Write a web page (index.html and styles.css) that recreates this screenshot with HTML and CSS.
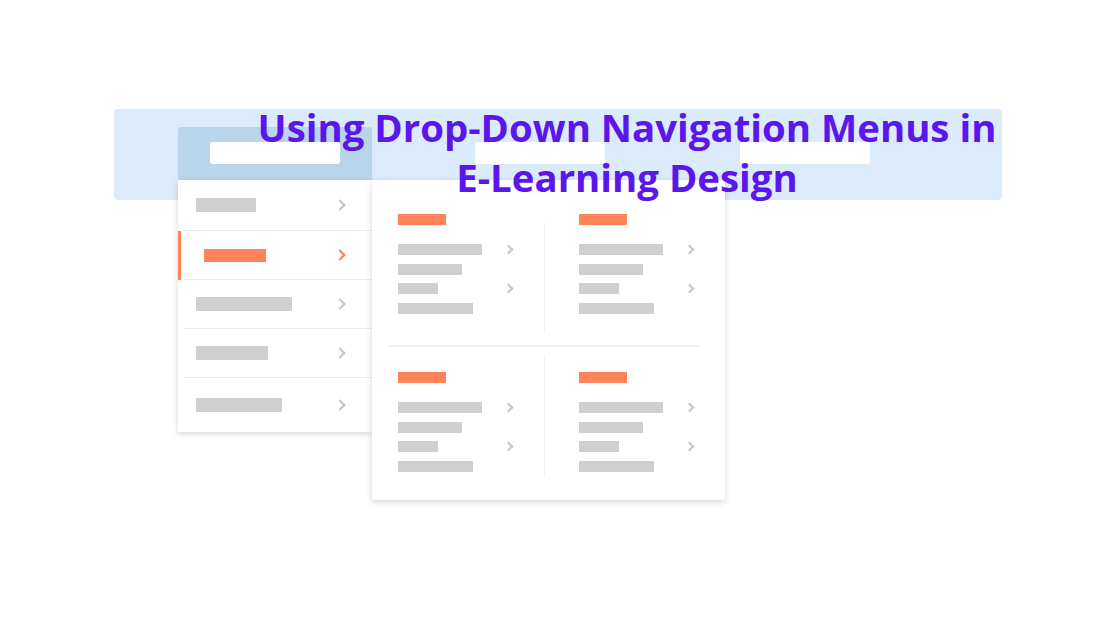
FILE: index.html
```html
<!DOCTYPE html>
<html lang="en">
<head>
  <meta charset="UTF-8" />
  <meta name="viewport" content="width=device-width, initial-scale=1.0"/>
  <title>Drop-Down Navigation Menus</title>
  <link rel="stylesheet" href="styles.css">
</head>

<body>
  <div class="scene">
    <nav class="navbar">
      <div class="tab active">
        <span class="pill"></span>

        <!-- first level menu -->
        <ul class="dropdown">
          <li class="item"><span class="bar w60"></span><span class="chev"></span></li>
          <li class="item current"><span class="bar orange w62"></span><span class="chev"></span></li>
          <li class="item"><span class="bar w96"></span><span class="chev"></span></li>
          <li class="item"><span class="bar w72"></span><span class="chev"></span></li>
          <li class="item last"><span class="bar w86"></span><span class="chev"></span></li>
        </ul>

        <!-- mega menu for the current item -->
        <div class="mega">
          <div class="mega-row">
            <div class="group">
              <span class="head"></span>
              <div class="links">
                <div class="link"><span class="bar w84"></span><span class="chev"></span></div>
                <div class="link"><span class="bar w64"></span></div>
                <div class="link"><span class="bar w40"></span><span class="chev"></span></div>
                <div class="link"><span class="bar w75"></span></div>
              </div>
            </div>
            <div class="vline top"></div>
            <div class="group right">
              <span class="head"></span>
              <div class="links">
                <div class="link"><span class="bar w84"></span><span class="chev"></span></div>
                <div class="link"><span class="bar w64"></span></div>
                <div class="link"><span class="bar w40"></span><span class="chev"></span></div>
                <div class="link"><span class="bar w75"></span></div>
              </div>
            </div>
          </div>

          <div class="hline"></div>

          <div class="mega-row">
            <div class="group">
              <span class="head"></span>
              <div class="links">
                <div class="link"><span class="bar w84"></span><span class="chev"></span></div>
                <div class="link"><span class="bar w64"></span></div>
                <div class="link"><span class="bar w40"></span><span class="chev"></span></div>
                <div class="link"><span class="bar w75"></span></div>
              </div>
            </div>
            <div class="vline bottom"></div>
            <div class="group right">
              <span class="head"></span>
              <div class="links">
                <div class="link"><span class="bar w84"></span><span class="chev"></span></div>
                <div class="link"><span class="bar w64"></span></div>
                <div class="link"><span class="bar w40"></span><span class="chev"></span></div>
                <div class="link"><span class="bar w75"></span></div>
              </div>
            </div>
          </div>
        </div>
      </div>

      <div class="tab"><span class="pill"></span></div>
      <div class="tab"><span class="pill"></span></div>
    </nav>

    <h1 class="title">Using Drop-Down Navigation Menus in<br>E-Learning Design</h1>
  </div>
</body>
</html>
```

FILE: styles.css
```css
body {
  margin: 0;
  background: #fff;
  font-family: "Open Sans", sans-serif;
}
.scene {
  position: relative;
  width: 1113px;
  height: 630px;
  padding-top: 109px;
  box-sizing: border-box;
  overflow: hidden;
}

/* top bar */
.navbar {
  margin-left: 114px;
  width: 888px;
  height: 91px;
  background: #dbebfb;
  border-radius: 4px;
  display: flex;
  gap: 71px;
  padding: 18px 0 0 64px;
  box-sizing: border-box;
}
.tab {
  position: relative;
  width: 194px;
  height: 53px;
  display: flex;
  justify-content: center;
  padding-top: 15px;
  box-sizing: border-box;
}
.tab.active {
  background: #b9d5eb;
  border-radius: 3px 3px 0 0;
}
.pill {
  width: 130px;
  height: 22px;
  background: #fff;
  border-radius: 3px;
}

/* placeholder text */
.bar {
  display: block;
  height: 14px;
  background: #cfcfcf;
}
.bar.orange { background: #ff8359; height: 13px; }
.w40 { width: 40px; }
.w60 { width: 60px; }
.w62 { width: 62px; }
.w64 { width: 64px; }
.w72 { width: 72px; }
.w75 { width: 75px; }
.w84 { width: 84px; }
.w86 { width: 86px; }
.w96 { width: 96px; }

.chev {
  width: 6px;
  height: 6px;
  border-top: 2px solid #c6c6c6;
  border-right: 2px solid #c6c6c6;
  transform: rotate(45deg);
}

/* first level */
.dropdown {
  position: absolute;
  top: 100%;
  left: 0;
  width: 194px;
  margin: 0;
  padding: 0;
  list-style: none;
  background: #fff;
  box-shadow: 0 2px 6px rgba(0, 0, 0, 0.16);
  z-index: 1;
}
.item {
  position: relative;
  height: 49px;
  margin-left: 5px;
  padding: 0 28px 0 13px;
  box-sizing: border-box;
  display: flex;
  align-items: center;
  justify-content: space-between;
  border-bottom: 1px solid #e4effa;
}
.item:first-child { height: 51px; }
.item.last {
  height: 54px;
  border-bottom: none;
}
.item.current { padding-left: 21px; }
.item.current::before {
  content: "";
  position: absolute;
  left: -5px;
  top: 0;
  bottom: -1px;
  width: 3px;
  background: #ff8359;
}
.item.current .chev { border-color: #ff7d50; }

/* mega menu */
.mega {
  position: absolute;
  top: 100%;
  left: 194px;
  width: 353px;
  height: 320px;
  background: #fff;
  box-shadow: 0 2px 6px rgba(0, 0, 0, 0.16);
  border-radius: 0 0 3px 3px;
  padding: 34px 24px 0 26px;
  box-sizing: border-box;
  z-index: 2;
}
.mega-row {
  display: grid;
  grid-template-columns: 146px 1px 1fr;
  align-items: start;
}
.group.right { padding-left: 34px; }
.head {
  display: block;
  width: 48px;
  height: 11px;
  background: #ff8359;
}
.links {
  margin-top: 19px;
  display: flex;
  flex-direction: column;
  gap: 8.7px;
}
.link {
  width: 114px;
  height: 11px;
  display: flex;
  align-items: center;
  justify-content: space-between;
}
.link .bar { height: 11px; }
.link .chev { width: 5px; height: 5px; }
.vline { background: #eef4fb; }
.vline.top { margin: 8px 0 -19px; height: 111px; }
.vline.bottom { margin: -16px 0 -4px; height: 120px; }
.hline {
  margin: 31px 0 25px -11px;
  width: 314px;
  height: 2px;
  background: #eef4fb;
}

/* heading laid over the drawing */
.title {
  position: absolute;
  top: 102px;
  left: 143px;
  width: 968px;
  margin: 0;
  text-align: center;
  font-size: 38.4px;
  line-height: 50px;
  font-weight: 700;
  color: #5b16ec;
  z-index: 3;
}
```
